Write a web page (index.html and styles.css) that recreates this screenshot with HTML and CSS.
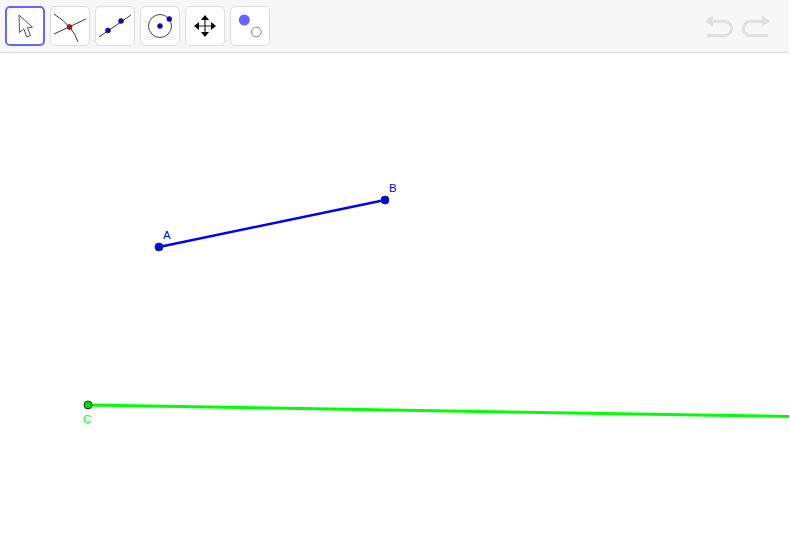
FILE: index.html
```html
<!DOCTYPE html>
<html lang="en">
<head>
    <meta charset="UTF-8">
    <meta name="viewport" content="width=device-width, initial-scale=1.0">
    <title>Construction</title>
    <link rel="stylesheet" href="styles.css">
</head>
<body>
    <div class="app">
        <div class="toolbar">
            <div class="tools">
                <button class="tool active">
                    <svg viewBox="0 0 36 36"><path d="M12 7 L12.500 24.500 L16.800 20.800 L19.800 29 L23.500 27.400 L20.500 19.800 L25.500 19.300 Z" fill="#fff" stroke="#555" stroke-width="1"/></svg>
                </button>
                <button class="tool">
                    <svg viewBox="0 0 38 38">
                        <path d="M3 27 L35 12" fill="none" stroke="#222" stroke-width="0.9"/>
                        <path d="M3 7 Q22 19 27 35" fill="none" stroke="#222" stroke-width="0.9"/>
                        <circle cx="18.500" cy="20" r="2.500" fill="#e00000" stroke="#333" stroke-width="0.7"/>
                    </svg>
                </button>
                <button class="tool">
                    <svg viewBox="0 0 38 38">
                        <path d="M3 30 L35 8" fill="none" stroke="#222" stroke-width="0.9"/>
                        <circle cx="12" cy="23.500" r="2.500" fill="#0000e0" stroke="#333" stroke-width="0.7"/>
                        <circle cx="25" cy="14" r="2.500" fill="#0000e0" stroke="#333" stroke-width="0.7"/>
                    </svg>
                </button>
                <button class="tool">
                    <svg viewBox="0 0 38 38">
                        <circle cx="19" cy="19" r="11.500" fill="none" stroke="#333" stroke-width="0.9"/>
                        <circle cx="19" cy="19" r="2.500" fill="#0000e0" stroke="#333" stroke-width="0.6"/>
                        <circle cx="28.300" cy="12" r="2.500" fill="#0000e0" stroke="#333" stroke-width="0.6"/>
                    </svg>
                </button>
                <button class="tool">
                    <svg viewBox="0 0 38 38">
                        <path d="M19 11 V27 M11 19 H27" stroke="#222" stroke-width="1.200" fill="none"/>
                        <path d="M19 8 L23 13 H15 Z M19 30 L23 25 H15 Z M8 19 L13 15 V23 Z M30 19 L25 15 V23 Z" fill="#000"/>
                    </svg>
                </button>
                <button class="tool">
                    <svg viewBox="0 0 38 38">
                        <circle cx="13.300" cy="13" r="5.500" fill="#6666ff"/>
                        <circle cx="25.300" cy="25" r="4.800" fill="#fff" stroke="#888" stroke-width="1"/>
                    </svg>
                </button>
            </div>
            <div class="history">
                <svg class="undo" viewBox="0 0 30 24">
                    <path d="M5 6 H20 A7.500 7.500 0 0 1 20 21 H2" fill="none" stroke="#e0e0e0" stroke-width="3"/>
                    <path d="M0 6 L8 0 V12 Z" fill="#e0e0e0"/>
                </svg>
                <svg class="redo" viewBox="0 0 30 24">
                    <path d="M25 6 H10 A7.500 7.500 0 0 0 10 21 H28" fill="none" stroke="#e0e0e0" stroke-width="3"/>
                    <path d="M30 6 L22 0 V12 Z" fill="#e0e0e0"/>
                </svg>
            </div>
        </div>
        <svg class="canvas" viewBox="0 53 789 501">
            <line x1="159" y1="247" x2="385" y2="200" stroke="#0000ff" stroke-width="2.500"/>
            <line x1="88" y1="405" x2="789" y2="416.500" stroke="#00ff00" stroke-width="3"/>
            <circle class="point" cx="159" cy="247" r="4" fill="#0000ff"/>
            <circle class="point" cx="385" cy="200" r="4" fill="#0000ff"/>
            <circle class="point" cx="88" cy="405" r="4" fill="#00dd00"/>
            <text class="label" x="163" y="239" fill="#0000ff">A</text>
            <text class="label" x="389" y="192" fill="#0000ff">B</text>
            <text class="label" x="83" y="423" fill="#00ff00">C</text>
        </svg>
    </div>
</body>
</html>
```

FILE: styles.css
```css
html, body {
    margin: 0;
    padding: 0;
    background-color: white;
    overflow: hidden;
}
.app {
    width: 789px;
    height: 554px;
    display: flex;
    flex-direction: column;
    font-family: 'Liberation Sans', Arial, sans-serif;
}
.toolbar {
    height: 52px;
    flex: none;
    display: flex;
    justify-content: space-between;
    background-color: #f7f7f7;
    border-bottom: 1px solid #dcdcdc;
}
.tools {
    display: flex;
    gap: 5px;
    padding: 6px 0 0 5px;
}
.tool {
    width: 40px;
    height: 40px;
    padding: 0;
    background-color: white;
    border: 1px solid #dddddd;
    border-radius: 5px;
    box-sizing: border-box;
    cursor: pointer;
}
.tool svg {
    display: block;
    width: 38px;
    height: 38px;
}
.tool.active {
    border: 2px solid #6666ff;
}
.tool.active svg {
    width: 36px;
    height: 36px;
}
.history {
    display: flex;
    gap: 7px;
    padding: 15px 19px 0 0;
}
.undo, .redo {
    width: 29px;
    height: 24px;
}
.canvas {
    display: block;
    flex: 1;
    width: 789px;
}
.point {
    stroke: #333333;
    stroke-width: 1;
}
.label {
    font-size: 11.5px;
}
```
